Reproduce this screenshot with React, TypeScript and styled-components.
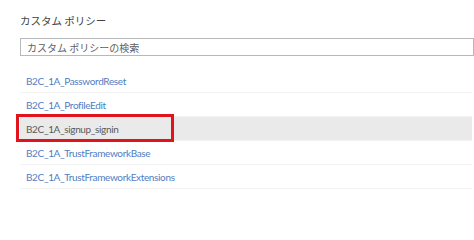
import styled, { createGlobalStyle } from 'styled-components';

const POLICIES = [
  'B2C_1A_PasswordReset',
  'B2C_1A_ProfileEdit',
  'B2C_1A_signup_signin',
  'B2C_1A_TrustFrameworkBase',
  'B2C_1A_TrustFrameworkExtensions',
];

const SELECTED = 'B2C_1A_signup_signin';

const GlobalStyle = createGlobalStyle`
  body {
    margin: 0;
    background: #ffffff;
    font-family: Lato, "Noto Sans CJK JP", sans-serif;
  }
`;

const App = () => {
  return (
    <>
      <GlobalStyle />
      <Page>
        <Title>カスタム ポリシー</Title>
        <SearchBox readOnly placeholder="カスタム ポリシーの検索" />
        <PolicyList>
          {POLICIES.map((name) => (
            <PolicyRow key={name} $selected={name === SELECTED}>
              {name}
              {name === SELECTED && <Highlight />}
            </PolicyRow>
          ))}
        </PolicyList>
      </Page>
    </>
  );
};

export default App;

const Page = styled.div`
  display: flex;
  flex-direction: column;
  padding: 13px 0 0 20px;
  width: 454px;
  height: 203px;
`;

const Title = styled.h1`
  margin: 0;
  font-size: 10.5px;
  font-weight: 400;
  line-height: 16px;
  color: #444444;
  font-family: "Noto Sans CJK JP", sans-serif;
`;

const SearchBox = styled.input`
  box-sizing: border-box;
  margin-top: 9px;
  width: 454px;
  height: 18px;
  padding: 0 6px;
  border: 1px solid #b8b8b8;
  border-radius: 0;
  outline: none;
  font-size: 10px;
  font-family: "Noto Sans CJK JP", sans-serif;
  &::placeholder {
    color: #606060;
  }
`;

const PolicyList = styled.ul`
  list-style: none;
  margin: 13px 0 0;
  padding: 0;
  width: 452px;
`;

const PolicyRow = styled.li<{ $selected: boolean }>`
  position: relative;
  box-sizing: border-box;
  height: 24px;
  padding-left: 6px;
  display: flex;
  align-items: center;
  border-bottom: 1px solid #f2f2f2;
  background: ${(p) => (p.$selected ? '#ebeaea' : 'transparent')};
  color: ${(p) => (p.$selected ? '#5a5a5a' : '#517dc2')};
  font-size: 10px;
  letter-spacing: -0.35px;
`;

const Highlight = styled.span`
  position: absolute;
  left: -4px;
  top: -3px;
  width: 158px;
  height: 28px;
  box-sizing: border-box;
  border: 3px solid #e1141e;
`;
